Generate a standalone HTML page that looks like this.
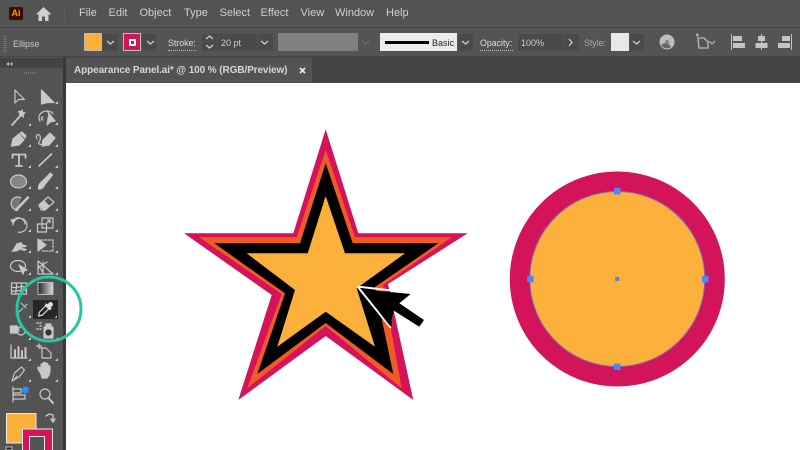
<!DOCTYPE html>
<html><head><meta charset="utf-8"><style>
html,body{margin:0;padding:0;width:800px;height:450px;overflow:hidden;background:#fff}
body{position:relative;font-family:"Liberation Sans",sans-serif;color:#d0d0d0}
div{position:absolute;box-sizing:border-box}
.m{top:6px;font-size:11px;line-height:14px;color:#cfcfcf;white-space:nowrap}
.c{font-size:9.5px;line-height:12px;color:#cfcfcf;white-space:nowrap}
.d{background:#4a4a4a;top:33.500px;height:17px}
.u{border-bottom:1px dotted #bbb;height:14px}
</style></head><body>
<div style="left:0;top:0;width:800px;height:27px;background:#535353"></div>
<div style="left:0;top:27px;width:800px;height:30px;background:#545454;border-top:1px solid #474747;border-bottom:1px solid #464646"></div>
<div style="left:66px;top:57px;width:734px;height:26px;background:#434343"></div>
<div style="left:0;top:57px;width:63px;height:393px;background:#535353"></div>
<div style="left:0;top:58px;width:63px;height:10px;background:#434343"></div>
<div style="left:63px;top:57px;width:3px;height:393px;background:#3a3a3a"></div>
<div style="left:66px;top:58px;width:246px;height:25px;background:#535353"></div>
<div style="left:9px;top:7px;width:14px;height:13px;background:#3d0a00;border-radius:2px;color:#ff9a00;font:bold 9px/13px 'Liberation Sans',sans-serif;text-align:center">Ai</div>
<div class="m" style="left:79px">File</div><div class="m" style="left:108.500px">Edit</div><div class="m" style="left:139.500px">Object</div><div class="m" style="left:184px">Type</div><div class="m" style="left:219.500px">Select</div><div class="m" style="left:260.500px">Effect</div><div class="m" style="left:300.500px">View</div><div class="m" style="left:335px">Window</div><div class="m" style="left:386px">Help</div>
<div class="c" style="left:13px;top:38px;font-size:9px;color:#c8c8c8">Ellipse</div>
<div style="left:84px;top:33px;width:17.500px;height:18px;background:#fbb03b;border:1px solid #bbb"></div>
<div class="d" style="left:102px;width:16px"></div>
<div style="left:123px;top:33px;width:18px;height:18px;background:#d4145a;border:1px solid #bbb"></div>
<div style="left:128.500px;top:38.500px;width:7px;height:7px;background:#fff;border:2px solid #fff"><div style="left:0;top:0;width:3px;height:3px;background:#555"></div></div>
<div class="d" style="left:142px;width:14px"></div>
<div class="c u" style="left:168px;top:37px;width:28px;font-size:8.800px;color:#ddd">Stroke:</div>
<div class="d" style="left:202px;width:15px"></div>
<div class="d" style="left:218px;width:39px"></div>
<div class="c" style="left:221px;top:37px;font-size:9px">20 pt</div>
<div class="d" style="left:258px;width:15px"></div>
<div style="left:278px;top:33px;width:80px;height:18px;background:#808080"></div>
<div style="left:380px;top:33px;width:77px;height:18px;background:#ececec"></div>
<div style="left:385px;top:41px;width:44px;height:3px;background:#000"></div>
<div class="c" style="left:432px;top:37px;color:#222;font-size:9px">Basic</div>
<div class="d" style="left:458px;width:15px"></div>
<div class="c u" style="left:480px;top:37px;width:33px;font-size:8.800px;color:#ddd">Opacity:</div>
<div class="d" style="left:518px;width:45px"></div>
<div class="c" style="left:521px;top:37px;font-size:9px">100%</div>
<div class="d" style="left:564px;width:15px"></div>
<div class="c" style="left:584px;top:37px;width:23px;font-size:8.800px;color:#aaa">Style:</div>
<div style="left:611px;top:33px;width:18px;height:18px;background:#e8e8e8"></div>
<div class="d" style="left:630px;width:14px"></div>
<div class="c" style="left:74px;top:65px;font-size:10px;font-weight:bold;color:#d6d6d6;letter-spacing:-.1px">Appearance Panel.ai* @ 100 % (RGB/Preview)</div>
<svg width="800" height="450" viewBox="0 0 800 450" style="position:absolute;left:0;top:0">
<path d="M43.500 7 L36 14.500 H38.500 V21 H42 V16.500 H45 V21 H48.500 V14.500 H51.500Z" fill="#d0d0d0"/>
<path d="M64.500 5V22" stroke="#5e5e5e"/>
<path d="M5 35V52" stroke="#777" stroke-dasharray="1 1" stroke-width="3"/>
<g fill="none" stroke="#ccc" stroke-width="1.300">
<path d="M107 41l3.500 3 3.500-3M147 41l3.500 3 3.500-3M261 41l3.500 3 3.500-3M462 41l3.500 3 3.500-3M633 41l3.500 3 3.500-3"/>
<path d="M206 39l3.500-3 3.500 3M206 45l3.500 3 3.500-3M569 39l3 3.500-3 3.500"/>
<path d="M362 41l3.500 3 3.500-3" stroke="#6f6f6f"/>
<path d="M709 41l3 3 3-3" stroke="#aaa"/>
<path d="M698 38h6l4 4v6h-9z" stroke="#bbb"/>
<path d="M696 35h3M697 33v4" stroke="#bbb" stroke-width="1"/>
</g>
<circle cx="667" cy="42" r="7.500" fill="#bdbdbd"/><path d="M667 42L661 45 A7 7 0 0 0 671 47Z" fill="#666"/><circle cx="667" cy="42" r="2" fill="#888"/>
<g fill="#c4c4c4">
<rect x="731" y="34" width="1" height="16"/><rect x="733" y="36" width="9" height="5"/><rect x="733" y="43" width="12" height="5"/>
<rect x="761" y="34" width="1" height="16"/><rect x="758" y="36" width="7" height="5"/><rect x="755.500" y="43" width="12" height="5"/>
<rect x="791" y="34" width="1" height="16"/><rect x="782" y="36" width="8" height="5"/><rect x="778" y="43" width="12" height="5"/>
</g>
<path d="M9 62l-3 2 3 2zM12.500 62l-3 2 3 2z" fill="#bbb"/>
<path d="M24 73h14" stroke="#777" stroke-width="2" stroke-dasharray="1 1"/>
<path d="M300 68l5 5m0-5l-5 5" stroke="#e6e6e6" stroke-width="1.800"/>
<!-- artwork -->
<path d="M325.700 129.300L358.300 233.300H467.700L388 284L413.300 400L325.700 336L238.300 400L271.700 295L184 233.300H293.300Z" fill="#d4145a"/>
<path d="M325.700 150L355 237.300H451.700L383 285L401.700 388.300L325.700 326L247.300 388.300L281.700 294L199.300 237.300H296.700Z" fill="#f15a24"/>
<path d="M325.700 163.300L352.700 243.300H438.300L375 287L393.300 374L325.700 323L257.300 374L285 293.300L214.300 243.300H300Z" fill="#000"/>
<path d="M325.700 196L345 253.300H405L356.700 288.300L375 346.700L325.700 311.700L277.300 346.700L295 290L246.700 253.300H307.700Z" fill="#fbb03b"/>
<path d="M390 291L392 328L383 320L378 296Z" fill="#000"/>
<path d="M357 286.500L392 290.500M357.500 286.500L391 328" stroke="#fff" stroke-width="2" fill="none"/>
<path d="M361.700 289.300L410.700 294L399.300 303.300L424 320L419.300 326.700L394 310.700L390 326Z" fill="#000"/>
<circle cx="617.300" cy="279" r="97.500" fill="#fbb03b" stroke="#d4145a" stroke-width="20"/>
<circle cx="617.300" cy="279" r="87.500" fill="none" stroke="#7f74b5" stroke-width="1"/>
<g fill="#4f86f7"><rect x="614" y="188" width="6.500" height="6.500"/><rect x="614" y="363.500" width="6.500" height="6.500"/><rect x="527" y="275.800" width="6.500" height="6.500"/><rect x="702" y="275.800" width="6.500" height="6.500"/><rect x="615.300" y="277" width="4" height="4" fill="#5a86c8"/></g>
<!-- tools -->
<g fill="none" stroke="#c8c8c8" stroke-width="1.200" stroke-linejoin="round" stroke-linecap="round">
<path d="M15 90L24.500 99.500L18.500 99.500L15 103Z"/>
<path d="M41.500 90L54 102.500H47L41.500 104Z" fill="#c8c8c8"/>
<path d="M12 125L21 115" stroke-width="1.800"/><path d="M22 110l.5 2.500 2.500.5-2 1.500.5 2.500-2-1.500-2 .5.500-2.500-1.500-2 2.500 0z" fill="#c8c8c8"/>
<path d="M40 121c-3-5 1-10 7-10 3 0 5 1 6 3"/><path d="M47 111l2 2-2 12 3-3 5-1z" fill="#c8c8c8"/><path d="M43 117c-2 0-2 3 0 3"/>
<path d="M11.500 146l1.500-7 6-5 5 6-5 5z" fill="#c8c8c8"/><path d="M20 133l2-1 4 4-1 2z" fill="#c8c8c8"/>
<path d="M37 139c-2-4 2-6 3-3 1 2 0 5-1 6-1 2 1 3 3 2"/><path d="M42 146l1-6 7-7 5 5-6 7z" fill="#c8c8c8"/>
<path d="M12.500 158v-3.500h13v3.500M19 154.500v11.500M16 166h6" stroke-width="1.800"/>
<path d="M39 166L51.500 154" stroke-width="1.600"/>
<ellipse cx="18.500" cy="181.500" rx="8" ry="6.500" fill="#868686"/>
<path d="M38.500 189c0-4 1-6 3-7l9-9 2 2-8 10c-1 3-3 4-6 4z" fill="#c8c8c8"/>
<path d="M21 198a6.500 6.500 0 1 0-3 12" fill="#777"/><path d="M16 210L28 197.500" stroke-width="2.500"/>
<path d="M39 205l9-8 6 5-9 8h-4z"/><path d="M39 205l5 5 5-4-5-5z" fill="#c8c8c8"/>
<path d="M13 225a7 7 0 1 1 5 7" stroke-dasharray="1.500 1"/><path d="M16 219l-3 4-2-3z" fill="#c8c8c8"/><path d="M25 224a7 7 0 0 0-9-6"/>
<rect x="37.500" y="224" width="9" height="8"/><rect x="42" y="218" width="11" height="10"/><path d="M46 224l4-4m-2.500 0h2.500v2.500"/>
<path d="M11.500 251c3-1 4-7 6-8 1 2 3-2 4 0 1 3 4 2 5 3-2 2-4 0-5 2 1 1 4 0 5 2-3 1-5 0-6-1-2 2-6 3-9 2z" fill="#c8c8c8" stroke-width=".6"/>
<path d="M38 239l8 6-8 6z" fill="#c8c8c8"/><path d="M41 240h12v11h-12" stroke-dasharray="2 1.500"/>
<ellipse cx="18" cy="266" rx="7.500" ry="5.500"/><path d="M19 265l4 9 1-3 3-1z" fill="#c8c8c8"/>
<path d="M38 261v13h15zM38 265l6 9M38 268l9-6M43 262v12"/>
<rect x="11.500" y="283" width="15" height="11"/><path d="M11.500 287c5 2 10-2 15 0M11.500 291c5 1 10-2 15 0M16 283c2 4-1 7 0 11M21 283c2 4-1 7 0 11"/>
</g>
<defs><linearGradient id="g"><stop offset="0" stop-color="#222"/><stop offset="1" stop-color="#ddd"/></linearGradient></defs>
<rect x="38" y="282.500" width="15" height="12" fill="url(#g)" stroke="#bbb"/>
<rect x="33" y="300" width="25" height="19" fill="#262626"/>
<g fill="none" stroke="#c8c8c8" stroke-width="1.200" stroke-linejoin="round" stroke-linecap="round">
<path d="M38.500 316l1-4 7-7 3 3-7 7z" stroke="#ddd"/><path d="M46 304l1.500 1 2-2a1.800 1.800 0 0 1 2.500 2.500l-2 2 1 1-1.500 1-4-4z" fill="#ddd" stroke="#ddd"/>
<path d="M16 315l7-7M21 303l5 5M25 306l2-2" stroke="#bbb"/>
<circle cx="21" cy="331" r="4"/><rect x="10.500" y="326" width="7" height="7" fill="#c8c8c8"/><circle cx="16" cy="330" r="3"/>
<path d="M40 326h1M37 329h1M40 329h1M37 323h1M40 323h1" stroke-width="1.500"/>
<rect x="44" y="327" width="9" height="11" fill="#c8c8c8"/><circle cx="48.500" cy="332.500" r="2.500" fill="#333" stroke="#333"/><path d="M46 327v-3h5v3" fill="#c8c8c8"/>
<path d="M11 345v13h16"/><path d="M15 357v-7M18.500 357v-10M22 357v-6M25.500 357v-9" stroke-width="2"/>
<path d="M36.500 346h5M39 344v4h7l5 5v5h-9v-10"/>
<path d="M12 381l2.500-8 7-6 3 3-5.500 7z"/><path d="M14 380l3-4"/>
<path d="M41 374l-3-5c-1-2 1-2.500 2-1l1 1v-4c0-1.500 2-1.500 2 0v-1.500c0-1.500 2.500-1.500 2.500 0v1c0-1.500 2.500-1.500 2.500 0v2c0-1 2-1 2 .5v4c0 3-2 6-3 7h-5z" fill="#c8c8c8"/>
<path d="M13 387v15M13 389h8v4h-8M13 395h12v4h-12"/>
<circle cx="45" cy="394" r="5"/><path d="M48.500 398l4.500 5" stroke-width="2"/>
<path d="M46 416l3-2 4 1v5M51 419l2 3 2-3" stroke-width="1.400"/>
</g>
<circle cx="25.500" cy="390" r="3.500" fill="#2f8fe6"/>
<path d="M55 104h3v-3zM28 126h3v-3zM55 125h3v-3zM28 147h3v-3zM55 147h3v-3zM28 168h3v-3zM55 168h3v-3zM28 189h3v-3zM55 189h3v-3zM28 211h3v-3zM55 211h3v-3zM28 232h3v-3zM55 232h3v-3zM28 253h3v-3zM55 253h3v-3zM28 275h3v-3zM55 275h3v-3zM54.500 318h2.500v-2.500zM28 318h3v-3zM28 340h3v-3zM55 340h3v-3zM28 361h3v-3zM55 361h3v-3zM28 382h3v-3zM55 382h3v-3z" fill="#c8c8c8"/>
<circle cx="49" cy="309" r="32" fill="none" stroke="#26c6a2" stroke-width="3"/>
<rect x="6.500" y="413.500" width="29.500" height="29.500" fill="#fbb03b" stroke="#e8e8e8"/>
<rect x="22.500" y="429" width="30" height="30" fill="#d4145a" stroke="#e8e8e8"/>
<rect x="29.500" y="436.500" width="15" height="20" fill="#535353" stroke="#e8e8e8"/>
<rect x="6" y="447" width="6" height="3" fill="#222" stroke="#ddd" stroke-width=".8"/>
</svg>
</body></html>
